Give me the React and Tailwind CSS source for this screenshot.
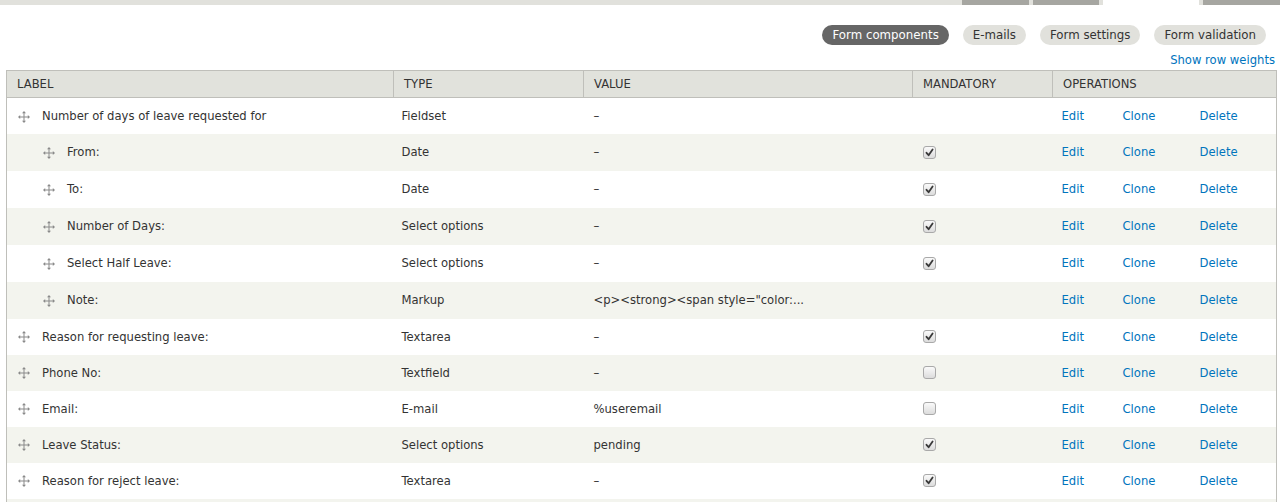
import React from 'react'

const rows = [
  { label: 'Number of days of leave requested for', type: 'Fieldset', value: '–', mandatory: null, depth: 0, h: 'h-[36px]' },
  { label: 'From:', type: 'Date', value: '–', mandatory: true, depth: 1, h: 'h-[37px]' },
  { label: 'To:', type: 'Date', value: '–', mandatory: true, depth: 1, h: 'h-[37px]' },
  { label: 'Number of Days:', type: 'Select options', value: '–', mandatory: true, depth: 1, h: 'h-[37px]' },
  { label: 'Select Half Leave:', type: 'Select options', value: '–', mandatory: true, depth: 1, h: 'h-[37px]' },
  { label: 'Note:', type: 'Markup', value: '<p><strong><span style="color:...', mandatory: null, depth: 1, h: 'h-[37px]' },
  { label: 'Reason for requesting leave:', type: 'Textarea', value: '–', mandatory: true, depth: 0, h: 'h-[36px]' },
  { label: 'Phone No:', type: 'Textfield', value: '–', mandatory: false, depth: 0, h: 'h-[36px]' },
  { label: 'Email:', type: 'E-mail', value: '%useremail', mandatory: false, depth: 0, h: 'h-[36px]' },
  { label: 'Leave Status:', type: 'Select options', value: 'pending', mandatory: true, depth: 0, h: 'h-[36px]' },
  { label: 'Reason for reject leave:', type: 'Textarea', value: '–', mandatory: true, depth: 0, h: 'h-[36px]' },
  { label: '', type: '', value: '', mandatory: null, depth: 0, h: 'h-[36px]' },
]

const tabs = [
  { name: 'Form components', active: true },
  { name: 'E-mails' },
  { name: 'Form settings' },
  { name: 'Form validation' },
]

function DragHandle() {
  return (
    <svg width="12" height="12" viewBox="0 0 12 12" className="shrink-0">
      <g fill="#8a8a8a">
        <rect x="5.5" y="1" width="1" height="10" />
        <rect x="1" y="5.5" width="10" height="1" />
        <path d="M6 0 L8 2.2 L4 2.2 Z" />
        <path d="M6 12 L8 9.8 L4 9.8 Z" />
        <path d="M0 6 L2.2 4 L2.2 8 Z" />
        <path d="M12 6 L9.8 4 L9.8 8 Z" />
      </g>
    </svg>
  )
}

function Checkbox({ checked }) {
  return (
    <span className="inline-flex items-center justify-center w-[13px] h-[13px] rounded-[3px] border border-[#a9a9a9] bg-gradient-to-b from-[#fafafa] to-[#dcdcdc]">
      {checked && (
        <svg width="9" height="9" viewBox="0 0 9 9">
          <path d="M1.5 4.8 L3.6 7.2 L7.6 1.4" fill="none" stroke="#3a3a3a" strokeWidth="1.8" strokeLinecap="round" strokeLinejoin="round" />
        </svg>
      )}
    </span>
  )
}

export default function App() {
  return (
    <div className="w-[1280px] h-[502px] overflow-hidden bg-white text-[#333] text-[11.6px] font-['DejaVu_Sans',sans-serif]">
      {/* top tab strip */}
      <div className="flex h-[5px] bg-[#e1e1dc]">
        <div className="w-[962px]" />
        <div className="w-[67px] bg-[#a6a6a1]" />
        <div className="w-[4px]" />
        <div className="w-[66px] bg-[#a6a6a1]" />
        <div className="w-[4px]" />
        <div className="w-[96px] bg-white" />
        <div className="w-[4px]" />
        <div className="flex-1 bg-[#a6a6a1]" />
      </div>

      <div className="flex justify-end gap-[14px] pr-[14px] pt-[20px]">
        {tabs.map(t => (
          <span
            key={t.name}
            className={t.active
              ? 'h-[20px] px-[10px] pt-[1px] rounded-[10px] bg-[#666] text-white text-[11.8px] flex items-center leading-none'
              : 'h-[20px] px-[10px] pt-[1px] rounded-[10px] bg-[#e1e1dc] text-[#333] text-[11.8px] flex items-center leading-none'}
          >
            {t.name}
          </span>
        ))}
      </div>

      <div className="flex justify-end pr-[5px] mt-[10px] h-[15px] text-[#0074bd] leading-none">
        Show row weights
      </div>

      <table className="ml-[6px] w-[1270px] border-collapse table-fixed">
        <colgroup>
          <col className="w-[387px]" />
          <col className="w-[190px]" />
          <col className="w-[329px]" />
          <col className="w-[140px]" />
          <col className="w-[224px]" />
        </colgroup>
        <thead>
          <tr className="h-[27px] bg-[#e1e2dc] text-[#333] text-left">
            {['LABEL', 'TYPE', 'VALUE', 'MANDATORY', 'OPERATIONS'].map(h => (
              <th key={h} className="border border-[#bfbfba] font-normal pl-[10px] pt-[2px]">{h}</th>
            ))}
          </tr>
        </thead>
        <tbody className="border-x border-[#bfbfba]">
          {rows.map((r, i) => (
            <tr key={i} className={`${r.h} ${i % 2 === 1 ? 'bg-[#f3f4ee]' : 'bg-white'}`}>
              <td className="pl-[11px] pt-[2px]">
                {r.label && (
                  <div className={`flex items-center gap-[12px] ${r.depth ? 'pl-[25px]' : ''}`}>
                    <DragHandle />
                    <span>{r.label}</span>
                  </div>
                )}
              </td>
              <td className="pl-[8px] pt-[2px]">{r.type}</td>
              <td className="pl-[10px] pt-[2px]">{r.value}</td>
              <td className="pl-[10px]">
                {r.mandatory !== null && <div className="flex"><Checkbox checked={r.mandatory} /></div>}
              </td>
              <td className="pl-[9px] pt-[2px]">
                {r.label && (
                  <div className="flex text-[#0074bd]">
                    <span className="w-[61px]">Edit</span>
                    <span className="w-[77px]">Clone</span>
                    <span>Delete</span>
                  </div>
                )}
              </td>
            </tr>
          ))}
        </tbody>
      </table>
    </div>
  )
}
